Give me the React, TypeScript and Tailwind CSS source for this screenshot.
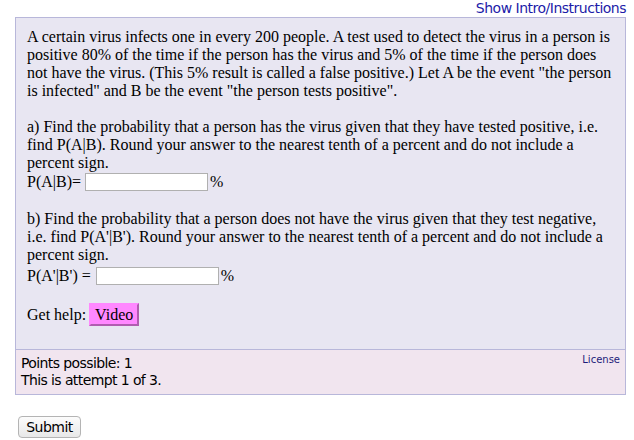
export default function App() {
  return (
    <div className="w-[634px] h-[440px] bg-white relative">
      <div className="flex justify-end pr-[8px] h-[17px]">
        <a className="text-[14px] leading-[17px] text-[#1c1ca8] font-['DejaVu_Sans',sans-serif] tracking-[-0.5px]">
          Show Intro/Instructions
        </a>
      </div>
      <div className="ml-[15px] w-[611px] border border-[#b8b7da]">
        <div className="bg-[#e8e6f2] px-[11px] pt-[10px] pb-[23px] font-['Liberation_Serif',serif] text-[16px] leading-[18px] text-black">
          <p>
            A certain virus infects one in every 200 people. A test used to detect the virus in a person is
            positive 80% of the time if the person has the virus and 5% of the time if the person does
            not have the virus. (This 5% result is called a false positive.) Let A be the event "the person
            is infected" and B be the event "the person tests positive".
          </p>
          <p className="mt-[18px]">
            a) Find the probability that a person has the virus given that they have tested positive, i.e.
            find P(A|B). Round your answer to the nearest tenth of a percent and do not include a
            percent sign.
          </p>
          <div className="flex items-center h-[19px]">
            <span>P(A|B)=</span>
            <input className="ml-[4px] w-[123px] h-[18px] bg-white border border-[#b0b0b0] outline-none" />
            <span className="ml-[2px]">%</span>
          </div>
          <p className="mt-[19px]">
            b) Find the probability that a person does not have the virus given that they test negative,
            i.e. find P(A'|B'). Round your answer to the nearest tenth of a percent and do not include a
            percent sign.
          </p>
          <div className="flex items-center h-[23px]">
            <span>P(A'|B') =</span>
            <input className="ml-[5px] w-[123px] h-[18px] bg-white border border-[#b0b0b0] outline-none" />
            <span className="ml-[2px]">%</span>
          </div>
          <div className="flex items-center mt-[16px]">
            <span>Get help:</span>
            <button className="ml-[3px] h-[23px] px-[4px] bg-[#ff88ff] border-2 border-[#ff88ff] border-r-[#b05cb0] border-b-[#b05cb0] leading-[18px]">
              Video
            </button>
          </div>
        </div>
        <div className="bg-[#f1e5ef] border-t border-[#b8b7da] h-[45px] px-[5px] pt-[5px] relative font-['DejaVu_Sans',sans-serif] text-[14px] leading-[17px] text-black tracking-[-0.6px]">
          <div className="absolute right-[5px] top-[4px] text-[10px] leading-[12px] text-[#1c1c7a] tracking-[0px]">License</div>
          <div>Points possible: 1</div>
          <div>This is attempt 1 of 3.</div>
        </div>
      </div>
      <div className="pl-[18px] pt-[19px]">
        <button className="w-[63px] h-[22px] rounded-[4px] border border-[#b4b4b4] bg-gradient-to-b from-[#fcfcfc] to-[#e8e8e8] font-['DejaVu_Sans',sans-serif] text-[14px] leading-[20px] text-black tracking-[-0.5px]">
          Submit
        </button>
      </div>
    </div>
  );
}
